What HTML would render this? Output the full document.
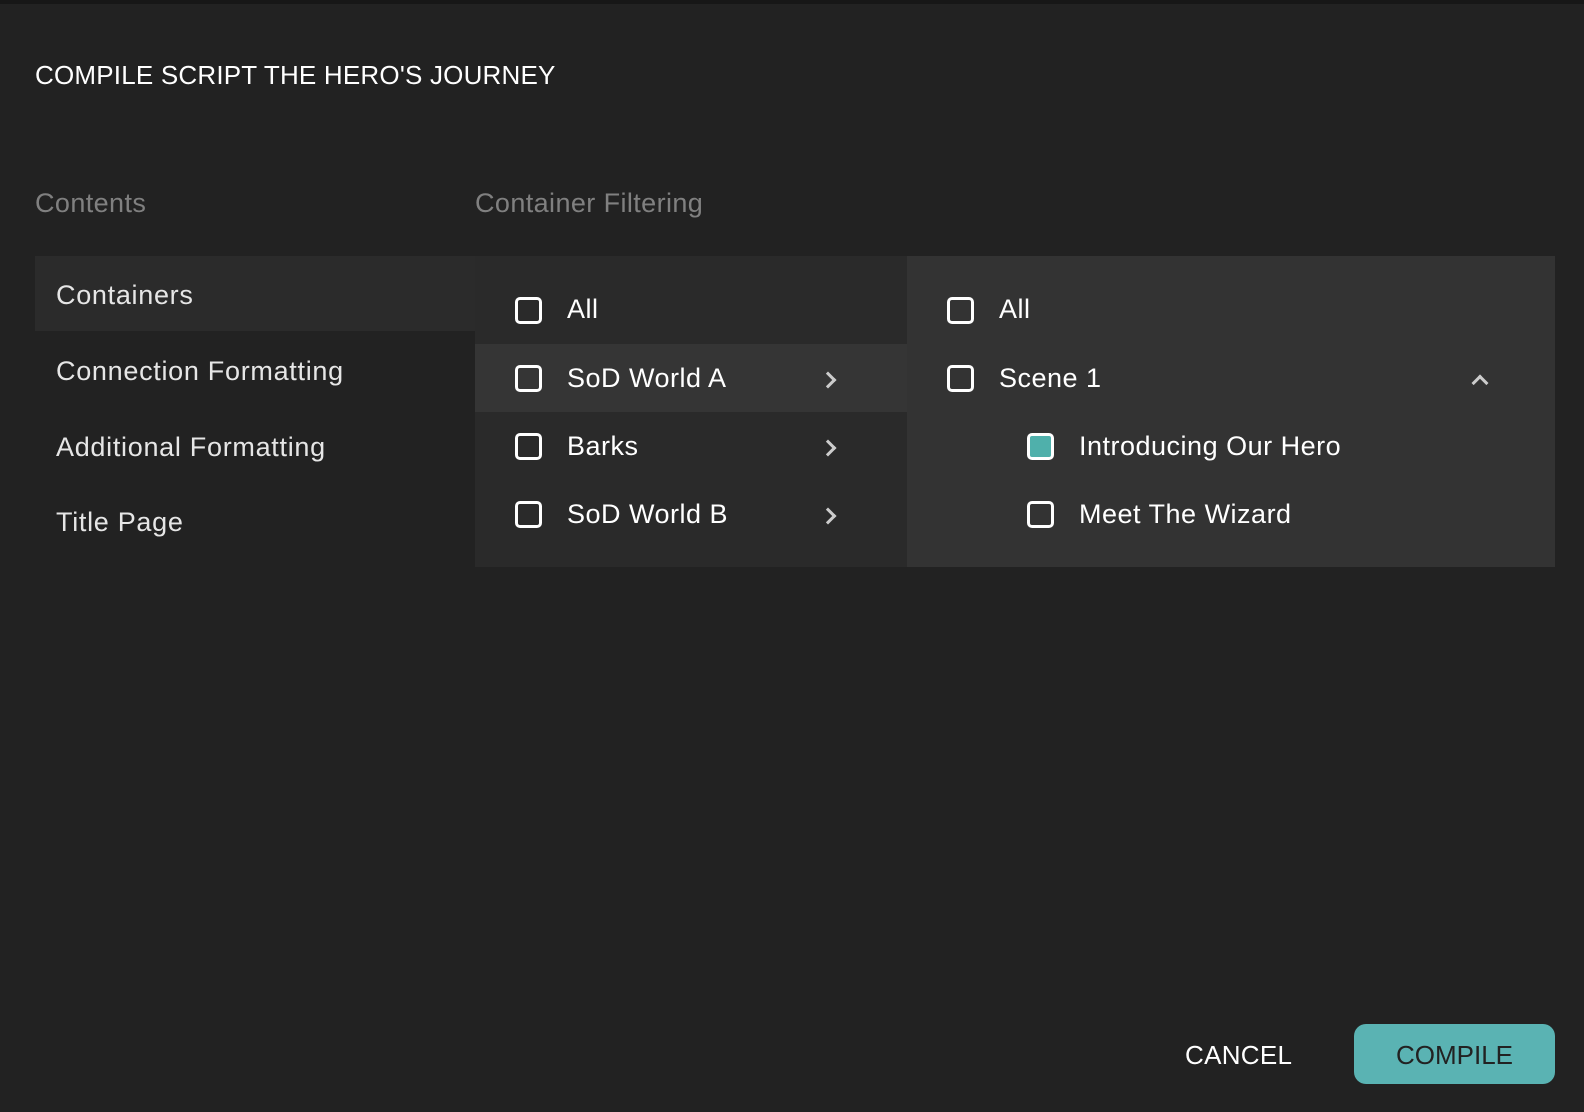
<!DOCTYPE html>
<html><head><meta charset="utf-8"><style>
*{margin:0;padding:0;box-sizing:border-box}
body{width:1584px;height:1112px;background:#222;font-family:"Liberation Sans",sans-serif;position:relative;overflow:hidden;color:#e8e8e8}
.top{position:absolute;left:0;top:0;width:1584px;height:4px;background:#171717}
.a{position:absolute;white-space:nowrap;line-height:1}
.t{font-size:26px;color:#fff;left:35px;top:62px;letter-spacing:0.2px}
.h{font-size:27px;color:#808080;top:190px;letter-spacing:0.4px}
.nav{font-size:27px;color:#e6e6e6;left:56px;letter-spacing:0.7px}
.bg{position:absolute}
.cb{position:absolute;width:27px;height:27px;border:3px solid #fff;border-radius:5px}
.it{font-size:27px;color:#fff;letter-spacing:0.5px}
.chev{position:absolute;width:12px;height:12px;border-right:3px solid #ccc;border-top:3px solid #ccc;transform:rotate(45deg)}
</style></head><body>
<div class="top"></div>
<div class="a t">COMPILE SCRIPT THE HERO'S JOURNEY</div>
<div class="a h" style="left:35px">Contents</div>
<div class="a h" style="left:475px">Container Filtering</div>

<div class="bg" style="left:35px;top:256px;width:440px;height:75px;background:#2b2b2b"></div>
<div class="a nav" style="top:282px">Containers</div>
<div class="a nav" style="top:358px">Connection Formatting</div>
<div class="a nav" style="top:434px">Additional Formatting</div>
<div class="a nav" style="top:509px">Title Page</div>

<div class="bg" style="left:475px;top:256px;width:432px;height:311px;background:#2a2a2a"></div>
<div class="bg" style="left:475px;top:344px;width:432px;height:68px;background:#353535"></div>
<div class="bg" style="left:907px;top:256px;width:648px;height:311px;background:#333"></div>

<div class="cb" style="left:515px;top:297px"></div><div class="a it" style="left:567px;top:296px">All</div>
<div class="cb" style="left:515px;top:365px"></div><div class="a it" style="left:567px;top:365px">SoD World A</div><div class="chev" style="left:822px;top:374px"></div>
<div class="cb" style="left:515px;top:433px"></div><div class="a it" style="left:567px;top:433px">Barks</div><div class="chev" style="left:822px;top:442px"></div>
<div class="cb" style="left:515px;top:501px"></div><div class="a it" style="left:567px;top:501px">SoD World B</div><div class="chev" style="left:822px;top:510px"></div>

<div class="cb" style="left:947px;top:297px"></div><div class="a it" style="left:999px;top:296px">All</div>
<div class="cb" style="left:947px;top:365px"></div><div class="a it" style="left:999px;top:365px">Scene 1</div>
<div class="chev" style="left:1474px;top:377px;transform:rotate(-45deg)"></div>
<div class="cb" style="left:1027px;top:433px;background:#4fb0ab"></div><div class="a it" style="left:1079px;top:433px">Introducing Our Hero</div>
<div class="cb" style="left:1027px;top:501px"></div><div class="a it" style="left:1079px;top:501px">Meet The Wizard</div>

<div class="a" style="left:1185px;top:1042px;font-size:26px;color:#fff;letter-spacing:0.3px">CANCEL</div>
<div class="bg" style="left:1354px;top:1024px;width:201px;height:60px;background:#5ab3b3;border-radius:12px"></div>
<div class="a" style="left:1354px;width:201px;text-align:center;top:1042px;font-size:26px;color:#222;letter-spacing:0px">COMPILE</div>
</body></html>
